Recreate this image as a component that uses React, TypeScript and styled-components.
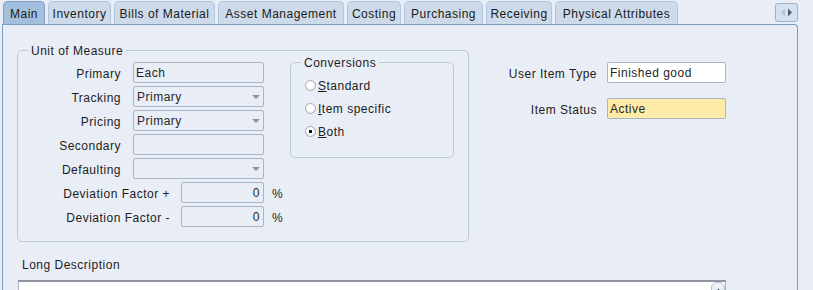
import React from 'react';
import styled, { createGlobalStyle } from 'styled-components';

const GlobalStyle = createGlobalStyle`
  html, body { margin: 0; padding: 0; background: #e9eef6; }
  body {
    font-family: "Liberation Sans", Arial, sans-serif;
    font-size: 12px;
    letter-spacing: 0.5px;
    color: #1c1c1c;
    overflow: hidden;
  }
`;

const Page = styled.div`
  width: 813px;
  height: 290px;
  overflow: hidden;
`;

const TabRow = styled.div`
  display: flex;
  align-items: flex-end;
  height: 24px;
  padding-left: 3px;
  gap: 3px;
`;

const Tab = styled.div<{ $w: number; $active?: boolean }>`
  box-sizing: border-box;
  width: ${p => p.$w}px;
  height: 23px;
  border: 1px solid ${p => (p.$active ? '#7c9ec4' : '#b3c6dc')};
  border-bottom: none;
  border-radius: 5px 5px 0 0;
  background: ${p => (p.$active ? '#a2c0de' : '#cddaea')};
  display: flex;
  align-items: center;
  justify-content: center;
  padding-top: 2px;
  color: #1a1a1a;
  white-space: nowrap;
  flex-shrink: 0;
`;

const TabScroller = styled.div`
  margin-left: auto;
  margin-right: 15px;
  align-self: flex-start;
  margin-top: 3px;
  width: 23px;
  height: 19px;
  box-sizing: border-box;
  border: 1px solid #9fb3ca;
  border-radius: 3px;
  background: #d3e1f0;
  display: flex;
  align-items: center;
  justify-content: center;
`;

const Panel = styled.div`
  margin-left: 2px;
  width: 796px;
  height: 280px;
  box-sizing: border-box;
  border: 1px solid #7a9cc2;
  border-bottom: none;
  border-top-right-radius: 4px;
  padding: 25px 0 0 14px;
`;

const TopArea = styled.div`
  display: flex;
  align-items: flex-start;
`;

const GroupBox = styled.div<{ $w: number; $h: number }>`
  position: relative;
  box-sizing: border-box;
  width: ${p => p.$w}px;
  height: ${p => p.$h}px;
  border: 1px solid #b8c9de;
  border-radius: 5px;
  display: flex;
  align-items: flex-start;
  flex-shrink: 0;
`;

const Legend = styled.span`
  position: absolute;
  top: -7px;
  left: 10px;
  padding: 0 3px;
  line-height: 15px;
  background: #e9eef6;
`;

const UomColumn = styled.div`
  width: 272px;
  padding-top: 11px;
  display: flex;
  flex-direction: column;
  gap: 3px;
`;

const Row = styled.div`
  display: flex;
  align-items: center;
  height: 21px;
`;

const Label = styled.span<{ $w: number }>`
  width: ${p => p.$w}px;
  flex-shrink: 0;
  text-align: right;
  white-space: nowrap;
  padding-top: 2px;
`;

const Field = styled.div<{ $w: number; $ml: number; $bg?: string; $right?: boolean }>`
  box-sizing: border-box;
  width: ${p => p.$w}px;
  height: 21px;
  margin-left: ${p => p.$ml}px;
  flex-shrink: 0;
  border: 1px solid #a9b5c4;
  border-radius: 2px;
  background: ${p => p.$bg ?? '#e9eef6'};
  padding: 1px 3px 0 2px;
  display: flex;
  align-items: center;
  justify-content: ${p => (p.$right ? 'flex-end' : 'space-between')};
  color: #262626;
  white-space: nowrap;
`;

const SelectField = styled(Field)`
  padding-left: 3px;
  padding-right: 3px;
`;

const Arrow = styled.span`
  width: 0;
  height: 0;
  border-left: 4px solid transparent;
  border-right: 4px solid transparent;
  border-top: 4px solid #8a95a3;
  margin-left: auto;
`;

const Unit = styled.span`
  margin-left: 8px;
  padding-top: 2px;
`;

const ConvBox = styled(GroupBox)`
  margin-top: 11px;
  flex-direction: column;
  padding: 11px 0 0 14px;
`;

const RadioRow = styled.label`
  display: flex;
  align-items: center;
  height: 23px;
  gap: 2px;
`;

const RadioCircle = styled.span<{ $on?: boolean }>`
  box-sizing: border-box;
  width: 11px;
  height: 11px;
  border-radius: 50%;
  border: 1px solid #a4a9b0;
  background: radial-gradient(circle at 40% 40%, #ffffff 40%, #e3e6ea 100%);
  display: flex;
  align-items: center;
  justify-content: center;
  &::after {
    content: '';
    width: 3px;
    height: 3px;
    background: ${p => (p.$on ? '#111' : 'transparent')};
  }
`;

const RightBlock = styled.div`
  margin-left: 39px;
  margin-top: 12px;
  display: grid;
  grid-template-columns: 89px 119px;
  column-gap: 10px;
  row-gap: 15px;
  align-items: center;
`;

const RLabel = styled.span`
  text-align: right;
  white-space: nowrap;
  padding-top: 2px;
`;

const LongLabel = styled.div`
  margin: 16px 0 0 5px;
  line-height: 15px;
`;

const TextArea = styled.div`
  margin: 7px 0 0 1px;
  width: 708px;
  height: 40px;
  box-sizing: border-box;
  background: #fff;
  border: 1px solid #a9b2bd;
  border-top: 2px solid #8e959e;
  display: flex;
  justify-content: flex-end;
  align-items: flex-start;
`;

const ScrollUp = styled.div`
  width: 14px;
  height: 16px;
  box-sizing: border-box;
  border: 1px solid #b6c3d2;
  border-radius: 6px 6px 2px 2px;
  background: linear-gradient(#f4f7fb, #d6e0eb);
  display: flex;
  align-items: center;
  justify-content: center;
`;

const tabs: { label: string; w: number; active?: boolean }[] = [
  { label: 'Main', w: 42, active: true },
  { label: 'Inventory', w: 63 },
  { label: 'Bills of Material', w: 101 },
  { label: 'Asset Management', w: 126 },
  { label: 'Costing', w: 54 },
  { label: 'Purchasing', w: 79 },
  { label: 'Receiving', w: 66 },
  { label: 'Physical Attributes', w: 123 },
];

export default function App() {
  return (
    <Page>
      <GlobalStyle />
      <TabRow>
        {tabs.map(t => (
          <Tab key={t.label} $w={t.w} $active={t.active}>
            {t.label}
          </Tab>
        ))}
        <TabScroller>
          <svg width="13" height="9" viewBox="0 0 13 9">
            <path d="M5 0.5 L1 4.5 L5 8.5 Z" fill="#b8c5d3" />
            <path d="M8 0.5 L12 4.5 L8 8.5 Z" fill="#56606c" />
          </svg>
        </TabScroller>
      </TabRow>
      <Panel>
        <TopArea>
          <GroupBox $w={452} $h={192}>
            <Legend>Unit of Measure</Legend>
            <UomColumn>
              <Row>
                <Label $w={103}>Primary</Label>
                <Field $w={131} $ml={12}>Each</Field>
              </Row>
              <Row>
                <Label $w={103}>Tracking</Label>
                <SelectField $w={131} $ml={12}>
                  Primary
                  <Arrow />
                </SelectField>
              </Row>
              <Row>
                <Label $w={103}>Pricing</Label>
                <SelectField $w={131} $ml={12}>
                  Primary
                  <Arrow />
                </SelectField>
              </Row>
              <Row>
                <Label $w={103}>Secondary</Label>
                <Field $w={131} $ml={12} />
              </Row>
              <Row>
                <Label $w={103}>Defaulting</Label>
                <SelectField $w={131} $ml={12}>
                  <Arrow />
                </SelectField>
              </Row>
              <Row>
                <Label $w={152}>Deviation Factor +</Label>
                <Field $w={83} $ml={11} $right>0</Field>
                <Unit>%</Unit>
              </Row>
              <Row>
                <Label $w={152}>Deviation Factor -</Label>
                <Field $w={83} $ml={11} $right>0</Field>
                <Unit>%</Unit>
              </Row>
            </UomColumn>
            <ConvBox $w={164} $h={96}>
              <Legend>Conversions</Legend>
              <RadioRow>
                <RadioCircle />
                <span><u>S</u>tandard</span>
              </RadioRow>
              <RadioRow>
                <RadioCircle />
                <span><u>I</u>tem specific</span>
              </RadioRow>
              <RadioRow>
                <RadioCircle $on />
                <span><u>B</u>oth</span>
              </RadioRow>
            </ConvBox>
          </GroupBox>
          <RightBlock>
            <RLabel>User Item Type</RLabel>
            <Field $w={119} $ml={0} $bg="#ffffff">Finished good</Field>
            <RLabel>Item Status</RLabel>
            <Field $w={119} $ml={0} $bg="#fdeca7">Active</Field>
          </RightBlock>
        </TopArea>
        <LongLabel>Long Description</LongLabel>
        <TextArea>
          <ScrollUp>
            <svg width="7" height="5" viewBox="0 0 7 5">
              <path d="M3.5 0.5 L6.5 4.5 L0.5 4.5 Z" fill="#4d5763" />
            </svg>
          </ScrollUp>
        </TextArea>
      </Panel>
    </Page>
  );
}
